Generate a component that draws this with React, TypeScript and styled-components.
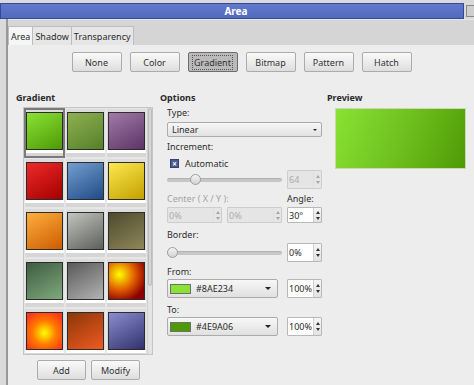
import styled, { createGlobalStyle } from "styled-components";

const GlobalStyle = createGlobalStyle`
  html, body {
    margin: 0;
    padding: 0;
    background: #dadada;
  }
  body {
    font-family: "Noto Sans", "Open Sans", sans-serif;
    font-size: 9px;
    color: #2e2e2e;
  }
`;

const Window = styled.div`
  width: 474px;
  height: 385px;
  overflow: hidden;
  display: flex;
  flex-direction: column;
  padding-top: 3px;
  box-sizing: border-box;
  background: #dadada;
`;

const TitleBar = styled.div`
  height: 16px;
  display: flex;
  align-items: center;
`;

const TitleStrip = styled.div`
  flex: 1;
  height: 16px;
  box-sizing: border-box;
  background: linear-gradient(#6179cc, #5169bf);
  border: 1px solid #34479a;
  display: flex;
  align-items: center;
  justify-content: center;
  color: #fff;
  font-weight: bold;
  font-size: 10px;
  padding-left: 8px;
`;

const TitleIcon = styled.div`
  width: 8px;
  height: 12px;
  margin-left: 2px;
  box-sizing: border-box;
  border: 1px solid #888;
  border-right: none;
  background: #cfcfcf;
`;

const Body = styled.div`
  flex: 1;
  display: flex;
  flex-direction: column;
  margin-left: 6px;
  border-left: 2px solid #999;
`;

const TabBar = styled.div`
  height: 26px;
  box-sizing: border-box;
  padding-top: 6px;
  display: flex;
  background: #d5d5d5;
  border-top: 1px solid #e6e6e6;
`;

const Tab = styled.div<{ $active?: boolean }>`
  height: 20px;
  box-sizing: border-box;
  padding: 0 2px;
  display: flex;
  align-items: center;
  border: 1px solid #bdbdbd;
  border-bottom: none;
  margin-right: -1px;
  background: ${(p) => (p.$active ? "#f6f6f6" : "#e6e6e6")};
  color: #2a2a2a;
`;

const Panel = styled.div`
  flex: 1;
  background: #ededed;
  padding-top: 7px;
  display: flex;
  flex-direction: column;
`;

const ButtonRow = styled.div`
  display: flex;
  justify-content: center;
  gap: 8px;
  padding-left: 1px;
`;

const PushButton = styled.div<{ $pressed?: boolean; $w?: number }>`
  width: ${(p) => p.$w ?? 50}px;
  height: 20px;
  box-sizing: border-box;
  display: flex;
  align-items: center;
  justify-content: center;
  border-radius: 2px;
  border: 1px solid ${(p) => (p.$pressed ? "#6d6d6d" : "#ababab")};
  background: ${(p) =>
    p.$pressed ? "#bababa" : "linear-gradient(#fafafa, #dedede)"};
  color: #333;
  font-size: 9px;
`;

const FocusText = styled.span`
  outline: 1px dotted #555;
  padding: 0 1px;
`;

const Columns = styled.div`
  display: flex;
  margin-top: 20px;
`;

const Heading = styled.div`
  height: 12px;
  line-height: 12px;
  font-weight: bold;
  color: #2a2a2a;
`;

const GradientCol = styled.div`
  width: 140px;
  margin-left: 8px;
  display: flex;
  flex-direction: column;
`;

const ListFrame = styled.div`
  margin: 3px 0 0 7px;
  width: 130px;
  height: 248px;
  box-sizing: border-box;
  border: 1px solid #c4c4c4;
  background: #e6e6e6;
  display: flex;
  overflow: hidden;
`;

const SwatchGrid = styled.div`
  width: 122px;
  padding: 1px 0 0 1px;
  display: grid;
  grid-template-columns: repeat(3, 39px);
  grid-auto-rows: 48px;
  gap: 2px;
`;

const Cell = styled.div<{ $selected?: boolean }>`
  box-sizing: border-box;
  padding: 3px 1px 0;
  background: linear-gradient(
    #dcdcdc 0 41px,
    #ffffff 41px 44px,
    #d6d6d6 44px
  );
  outline: ${(p) => (p.$selected ? "2px solid #7a7a7a" : "none")};
  outline-offset: -1px;
`;

const Swatch = styled.div<{ $bg: string }>`
  width: 37px;
  height: 38px;
  box-sizing: border-box;
  border: 1px solid #2c2c2c;
  background: ${(p) => p.$bg};
`;

const ScrollTrack = styled.div`
  width: 6px;
  margin-left: 1px;
  background: #e4e4e4;
  border-left: 1px solid #d0d0d0;
  display: flex;
  flex-direction: column;
`;

const ScrollThumb = styled.div`
  height: 176px;
  background: #d6d6d6;
  border: 1px solid #bcbcbc;
  border-radius: 2px;
`;

const ListButtons = styled.div`
  display: flex;
  gap: 5px;
  margin: 5px 0 0 21px;
`;

const OptionsCol = styled.div`
  width: 162px;
  margin-left: 4px;
  display: flex;
  flex-direction: column;
`;

const Indent = styled.div`
  padding-left: 7px;
  display: flex;
  flex-direction: column;
`;

const Label = styled.div<{ $top?: number; $disabled?: boolean }>`
  height: 12px;
  line-height: 12px;
  margin-top: ${(p) => p.$top ?? 0}px;
  color: ${(p) => (p.$disabled ? "#a4a4a4" : "#2e2e2e")};
`;

const Select = styled.div`
  margin-top: 3px;
  height: 15px;
  box-sizing: border-box;
  border: 1px solid #ababab;
  border-radius: 2px;
  background: linear-gradient(#f7f7f7, #e2e2e2);
  display: flex;
  align-items: center;
  justify-content: space-between;
  padding: 0 4px;
`;

const Arrow = styled.span<{ $size?: number }>`
  width: 0;
  height: 0;
  border-left: ${(p) => p.$size ?? 3}px solid transparent;
  border-right: ${(p) => p.$size ?? 3}px solid transparent;
  border-top: ${(p) => p.$size ?? 3}px solid #222;
`;

const CheckRow = styled.div`
  margin-top: 4px;
  height: 12px;
  display: flex;
  align-items: center;
  gap: 6px;
  padding-left: 3px;
`;

const CheckBox = styled.div`
  width: 9px;
  height: 9px;
  box-sizing: border-box;
  background: #4b5a8e;
  border: 1px solid #36426e;
  color: #fff;
  font-size: 8px;
  line-height: 7px;
  font-weight: bold;
  text-align: center;
`;

const Row = styled.div<{ $top?: number; $gap?: number }>`
  display: flex;
  align-items: center;
  margin-top: ${(p) => p.$top ?? 0}px;
  gap: ${(p) => p.$gap ?? 5}px;
`;

const SliderTrack = styled.div`
  position: relative;
  width: 115px;
  height: 3px;
  border-radius: 2px;
  background: #c6c6c6;
  border-top: 1px solid #b2b2b2;
`;

const Knob = styled.div`
  position: absolute;
  top: -5px;
  width: 11px;
  height: 11px;
  box-sizing: border-box;
  border-radius: 50%;
  border: 1px solid #9d9d9d;
  background: linear-gradient(#f3f3f3, #d3d3d3);
`;

const Spin = styled.div<{ $w?: number; $h?: number; $disabled?: boolean }>`
  width: ${(p) => p.$w ?? 35}px;
  height: ${(p) => p.$h ?? 19}px;
  box-sizing: border-box;
  border: 1px solid ${(p) => (p.$disabled ? "#cdcdcd" : "#b8b8b8")};
  background: ${(p) => (p.$disabled ? "#e5e5e5" : "#ffffff")};
  color: ${(p) => (p.$disabled ? "#acacac" : "#2a2a2a")};
  display: flex;
  align-items: center;
  justify-content: space-between;
  padding-left: 1px;
  border-radius: 1px;
`;

const SpinArrows = styled.div<{ $disabled?: boolean }>`
  width: 7px;
  align-self: stretch;
  border-left: 1px solid ${(p) => (p.$disabled ? "#d4d4d4" : "#cfcfcf")};
  background: ${(p) => (p.$disabled ? "#e8e8e8" : "linear-gradient(#f5f5f5, #e2e2e2)")};
  display: flex;
  flex-direction: column;
  align-items: center;
  justify-content: center;
  gap: 3px;
  opacity: ${(p) => (p.$disabled ? 0.35 : 1)};
`;

const Up = styled.span`
  border-left: 2px solid transparent;
  border-right: 2px solid transparent;
  border-bottom: 3px solid #333;
`;

const Down = styled.span`
  border-left: 2px solid transparent;
  border-right: 2px solid transparent;
  border-top: 3px solid #333;
`;

const ColorDrop = styled.div`
  width: 111px;
  height: 19px;
  box-sizing: border-box;
  border: 1px solid #ababab;
  border-radius: 2px;
  background: linear-gradient(#f7f7f7, #e0e0e0);
  display: flex;
  align-items: center;
  padding: 0 6px 0 2px;
  gap: 5px;
`;

const ColorChip = styled.div<{ $c: string }>`
  width: 21px;
  height: 10px;
  box-sizing: border-box;
  border: 1px solid #6f6f6f;
  background: ${(p) => p.$c};
`;

const ColorName = styled.span`
  flex: 1;
  color: #2a2a2a;
`;

const PreviewCol = styled.div`
  margin-left: 5px;
  display: flex;
  flex-direction: column;
`;

const PreviewBox = styled.div`
  margin: 4px 0 0 8px;
  width: 131px;
  height: 61px;
  box-sizing: border-box;
  border: 1px solid #c7dbb1;
  background: linear-gradient(112deg, #8ae234 0%, #6fc11e 50%, #4e9a06 100%);
`;

const swatches = [
  "linear-gradient(150deg, #8ae234, #4e9a06)",
  "linear-gradient(150deg, #8fb04f, #55812a)",
  "linear-gradient(150deg, #a27aa8, #5c3566)",
  "linear-gradient(150deg, #ef2929, #a40000)",
  "linear-gradient(150deg, #729fcf, #204a87)",
  "linear-gradient(150deg, #fce94f, #c4a000)",
  "linear-gradient(150deg, #fcaf3e, #ce5c00)",
  "linear-gradient(150deg, #c2c4bf, #5d5f5b)",
  "linear-gradient(150deg, #4d4a2c, #8f865a)",
  "linear-gradient(150deg, #3f5c40, #7fa97c)",
  "linear-gradient(150deg, #595959, #b3b3b3)",
  "radial-gradient(circle at 30% 32%, #ffff00 0%, #e05a00 45%, #8b0000 80%)",
  "radial-gradient(circle at 50% 55%, #ffff00 0%, #ff7a00 45%, #ff3a1a 85%)",
  "linear-gradient(150deg, #8c3708, #f05a22)",
  "linear-gradient(150deg, #8b8cd0, #30336b)",
];

const SpinBox = ({ value, w, h, disabled }: { value: string; w?: number; h?: number; disabled?: boolean }) => (
  <Spin $w={w} $h={h} $disabled={disabled}>
    <span>{value}</span>
    <SpinArrows $disabled={disabled}>
      <Up />
      <Down />
    </SpinArrows>
  </Spin>
);

export default function App() {
  return (
    <>
      <GlobalStyle />
      <Window>
        <TitleBar>
          <TitleStrip>Area</TitleStrip>
          <TitleIcon />
        </TitleBar>
        <Body>
          <TabBar>
            <Tab $active>Area</Tab>
            <Tab>Shadow</Tab>
            <Tab>Transparency</Tab>
          </TabBar>
          <Panel>
            <ButtonRow>
              <PushButton>None</PushButton>
              <PushButton>Color</PushButton>
              <PushButton $pressed>
                <FocusText>Gradient</FocusText>
              </PushButton>
              <PushButton>Bitmap</PushButton>
              <PushButton>Pattern</PushButton>
              <PushButton>Hatch</PushButton>
            </ButtonRow>
            <Columns>
              <GradientCol>
                <Heading>Gradient</Heading>
                <ListFrame>
                  <SwatchGrid>
                    {swatches.map((bg, i) => (
                      <Cell key={i} $selected={i === 0}>
                        <Swatch $bg={bg} />
                      </Cell>
                    ))}
                  </SwatchGrid>
                  <ScrollTrack>
                    <ScrollThumb />
                  </ScrollTrack>
                </ListFrame>
                <ListButtons>
                  <PushButton $w={49}>Add</PushButton>
                  <PushButton $w={49}>Modify</PushButton>
                </ListButtons>
              </GradientCol>

              <OptionsCol>
                <Heading>Options</Heading>
                <Indent>
                  <Label $top={3}>Type:</Label>
                  <Select>
                    <span>Linear</span>
                    <Arrow $size={2.5} />
                  </Select>
                  <Label $top={4}>Increment:</Label>
                  <CheckRow>
                    <CheckBox>×</CheckBox>
                    <span>Automatic</span>
                  </CheckRow>
                  <Row $top={1}>
                    <SliderTrack>
                      <Knob style={{ left: 23 }} />
                    </SliderTrack>
                    <SpinBox value="64" disabled />
                  </Row>
                  <Row $top={4} $gap={0}>
                    <Label $disabled style={{ width: 120 }}>Center ( X / Y ):</Label>
                    <Label>Angle:</Label>
                  </Row>
                  <Row $top={2} $gap={5}>
                    <SpinBox value="0%" w={55} h={16} disabled />
                    <SpinBox value="0%" w={55} h={16} disabled />
                    <SpinBox value="30°" h={16} />
                  </Row>
                  <Label $top={6}>Border:</Label>
                  <Row $top={2}>
                    <SliderTrack>
                      <Knob style={{ left: 0 }} />
                    </SliderTrack>
                    <SpinBox value="0%" />
                  </Row>
                  <Label $top={4}>From:</Label>
                  <Row $top={1} $gap={9}>
                    <ColorDrop>
                      <ColorChip $c="#8ae234" />
                      <ColorName>#8AE234</ColorName>
                      <Arrow />
                    </ColorDrop>
                    <SpinBox value="100%" />
                  </Row>
                  <Label $top={6}>To:</Label>
                  <Row $top={1} $gap={9}>
                    <ColorDrop>
                      <ColorChip $c="#4e9a06" />
                      <ColorName>#4E9A06</ColorName>
                      <Arrow />
                    </ColorDrop>
                    <SpinBox value="100%" />
                  </Row>
                </Indent>
              </OptionsCol>

              <PreviewCol>
                <Heading>Preview</Heading>
                <PreviewBox />
              </PreviewCol>
            </Columns>
          </Panel>
        </Body>
      </Window>
    </>
  );
}
